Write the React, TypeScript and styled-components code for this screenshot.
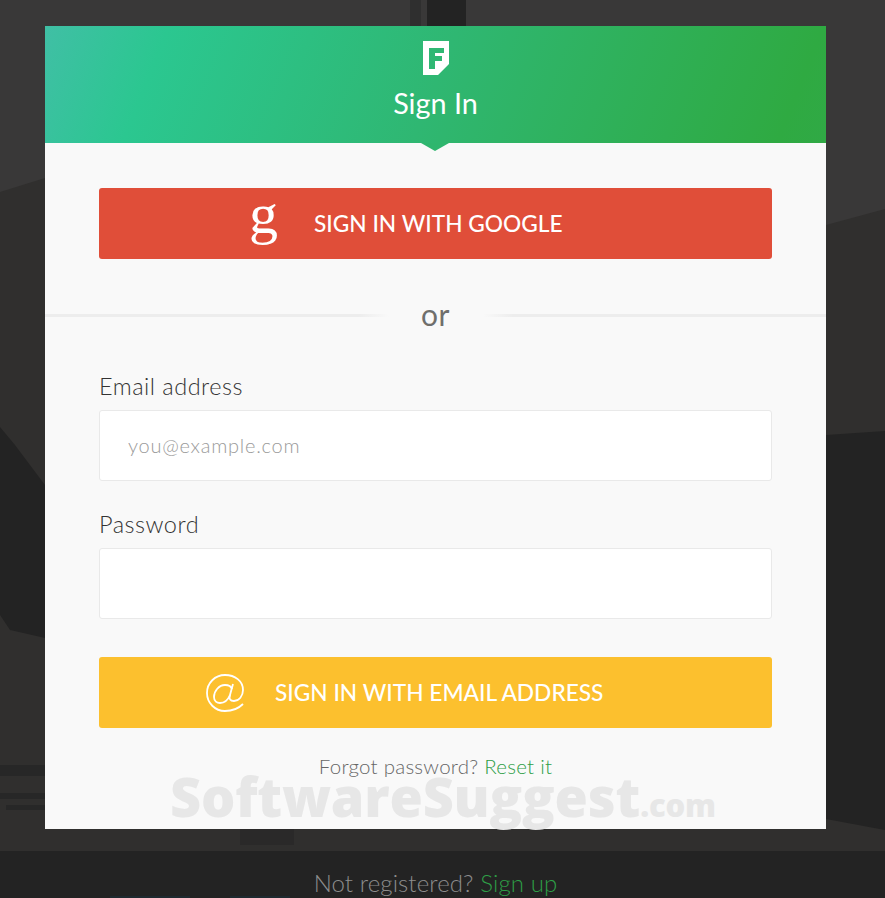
import React, { FC } from 'react';
import styled, { createGlobalStyle } from 'styled-components';

const GlobalStyle = createGlobalStyle`
  html, body {
    margin: 0;
    padding: 0;
    height: 100%;
    background: #232323;
    overflow: hidden;
  }
  * {
    box-sizing: border-box;
  }
`;

const FONT = `Lato, "Open Sans", "Liberation Sans", sans-serif`;
const GREEN = '#2e9e46';

// the blurred photo behind the card, reduced to its flat tonal shapes
const Backdrop: FC = () => (
  <BackdropSvg width="885" height="898" viewBox="0 0 885 898">
    <rect width="885" height="898" fill="#232323" />
    <path fill="#302f2e" d="M0 0H885V431L826 435V819L885 830V851H0Z" />
    <path fill="#393838" d="M0 0H885V209L826 225H45V178L0 192Z" />
    <path fill="#232323" d="M0 427L15 445L30 465L45 485V638L10 630L0 615Z" />
    <path fill="#272727" d="M0 765H45V776H0ZM0 793H45V799H0ZM6 805H45V810H6Z" />
    <path fill="#2f2f2f" d="M410 0H421V26H410Z" />
    <path fill="#232323" d="M427 0H466V26H427Z" />
    <path fill="#2a2929" d="M240 829H294V845H240Z" />
    <path fill="#1f2a30" d="M110 896H190V898H110ZM230 896H290V898H230Z" />
  </BackdropSvg>
);

const FoursquareLogo: FC = () => (
  <svg width="26" height="34" viewBox="0 0 26 34">
    <path
      fillRule="evenodd"
      fill="#fff"
      d="M0 0H26V23L15 34H0ZM6 7V28H12V20H19V15H12V12H21V7Z"
    />
  </svg>
);

const AtIcon: FC = () => (
  <svg width="40" height="40" viewBox="0 0 40 40" fill="none" stroke="#fff" strokeWidth="1.8">
    <path d="M38 31C33 36 26 38 20 38C10 38 2 30 2 20C2 10 10 2 20 2C30 2 38 8 38 17C38 23 34 28 29 28C25 28 24 26 25 22L28 11" />
    <path d="M27 16C26 13 23 12 20 12C14 12 9 18 9 24C9 28 12 30 15 30C19 30 23 27 25 22" />
  </svg>
);

const App: FC = () => {
  return (
    <Page>
      <GlobalStyle />
      <Backdrop />
      <Card>
        <Header>
          <FoursquareLogo />
          <Title>Sign In</Title>
          <Notch />
        </Header>
        <Body>
          <ActionButton $bg="#e04e39" $gap={37} $left={150}>
            <GoogleGlyph>g</GoogleGlyph>
            SIGN IN WITH GOOGLE
          </ActionButton>
          <Divider>
            <DividerLine $fade="right" />
            <DividerText>or</DividerText>
            <DividerLine $fade="left" />
          </Divider>
          <Field $after={29}>
            <Label>Email address</Label>
            <Input type="text" placeholder="you@example.com" />
          </Field>
          <Field $after={38}>
            <Label>Password</Label>
            <Input type="password" />
          </Field>
          <ActionButton $bg="#fcc02e" $gap={30} $left={106}>
            <AtIcon />
            SIGN IN WITH EMAIL ADDRESS
          </ActionButton>
          <Forgot>
            Forgot password? <GreenLink href="#">Reset it</GreenLink>
          </Forgot>
        </Body>
        <Watermark>
          SoftwareSuggest<WatermarkTld>.com</WatermarkTld>
        </Watermark>
      </Card>
      <Footer>
        Not registered? <GreenLink href="#">Sign up</GreenLink>
      </Footer>
    </Page>
  );
};

export default App;

const Page = styled.div`
  position: relative;
  width: 885px;
  height: 898px;
  overflow: hidden;
  padding: 26px 59px 0 45px;
  font-family: ${FONT};
`;

const BackdropSvg = styled.svg`
  position: absolute;
  top: 0;
  left: 0;
`;

const Card = styled.div`
  position: relative;
  width: 781px;
  height: 803px;
  background: #f9f9f9;
`;

const Header = styled.div`
  position: relative;
  height: 117px;
  padding-top: 15px;
  display: flex;
  flex-direction: column;
  align-items: center;
  background: linear-gradient(112deg, #40bfa5 0, #2bc790 15%, #2fb772 50%, #2faa42 94%, #30a945 100%);
`;

const Title = styled.div`
  margin-top: 11px;
  font-size: 28.8px;
  line-height: 34px;
  color: #fff;
`;

const Notch = styled.div`
  position: absolute;
  left: 376px;
  bottom: -8px;
  width: 0;
  height: 0;
  border-left: 14px solid transparent;
  border-right: 14px solid transparent;
  border-top: 8px solid #2fb66e;
`;

const Body = styled.div`
  display: flex;
  flex-direction: column;
  padding: 45px 54px 0;
`;

const ActionButton = styled.div<{ $bg: string; $gap: number; $left: number }>`
  display: flex;
  align-items: center;
  gap: ${({ $gap }) => $gap}px;
  height: 71px;
  padding-left: ${({ $left }) => $left}px;
  border-radius: 3px;
  background: ${({ $bg }) => $bg};
  color: #fff;
  font-size: 22.7px;
  font-weight: 500;
`;

const GoogleGlyph = styled.span`
  width: 28px;
  font-family: 'Liberation Serif', serif;
  font-size: 58px;
  line-height: 58px;
  margin-top: -20px;
  text-align: center;
`;

const Divider = styled.div`
  display: flex;
  align-items: center;
  height: 113px;
  margin: 0 -54px;
`;

const DividerLine = styled.div<{ $fade: 'left' | 'right' }>`
  flex: 1;
  height: 3px;
  background: linear-gradient(
    to ${({ $fade }) => $fade},
    #ededed 0,
    #ededed calc(100% - 30px),
    #f9f9f9 100%
  );
`;

const DividerText = styled.div`
  width: 94px;
  margin-bottom: 4px;
  text-align: center;
  font-size: 30px;
  line-height: 34px;
  letter-spacing: 0.6px;
  color: #6f6f6c;
`;

const Field = styled.div<{ $after: number }>`
  display: flex;
  flex-direction: column;
  margin-bottom: ${({ $after }) => $after}px;
`;

const Label = styled.label`
  margin-bottom: 10px;
  font-size: 23.5px;
  line-height: 28px;
  font-weight: 300;
  letter-spacing: 0.5px;
  color: #333;
`;

const Input = styled.input`
  height: 71px;
  padding: 0 28px 2px;
  border: 1px solid #e9e9e9;
  border-radius: 3px;
  background: #fff;
  font-family: ${FONT};
  font-size: 20px;
  font-weight: 300;
  letter-spacing: 0.75px;
  outline: none;
  &::placeholder {
    color: #9a9a9a;
  }
`;

const Forgot = styled.div`
  margin-top: 24px;
  text-align: center;
  font-size: 20.5px;
  line-height: 28px;
  font-weight: 300;
  letter-spacing: 0.25px;
  color: #666;
`;

const GreenLink = styled.a`
  color: ${GREEN};
  text-decoration: none;
`;

const Watermark = styled.div`
  position: absolute;
  left: 125px;
  top: 750px;
  font-family: 'Open Sans', sans-serif;
  font-size: 54px;
  line-height: 40px;
  font-weight: 800;
  letter-spacing: -0.2px;
  white-space: nowrap;
  color: #e7e7e7;
`;

const WatermarkTld = styled.span`
  font-size: 31px;
`;

const Footer = styled.div`
  position: relative;
  margin-top: 38px;
  text-align: center;
  font-size: 24px;
  line-height: 32px;
  font-weight: 300;
  letter-spacing: 0.1px;
  color: #8d8d8d;
`;
